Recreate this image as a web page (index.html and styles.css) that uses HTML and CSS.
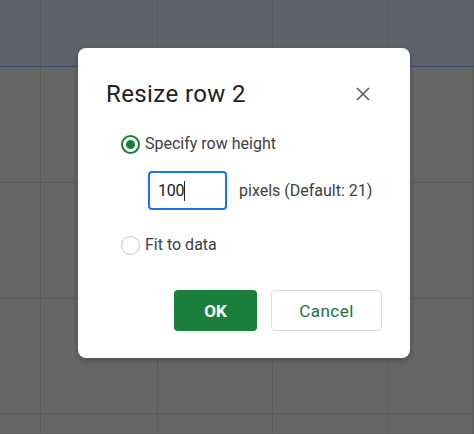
FILE: index.html
```html
<!DOCTYPE html>
<html>
<head>
<meta charset="utf-8">
<link rel="stylesheet" href="styles.css">
</head>
<body>
<div class="sheet">
  <div class="cell sel"></div><div class="cell sel"></div><div class="cell sel"></div><div class="cell sel"></div><div class="cell sel"></div>
  <div class="cell"></div><div class="cell"></div><div class="cell"></div><div class="cell"></div><div class="cell"></div>
  <div class="cell"></div><div class="cell"></div><div class="cell"></div><div class="cell"></div><div class="cell"></div>
  <div class="cell"></div><div class="cell"></div><div class="cell"></div><div class="cell"></div><div class="cell"></div>
  <div class="cell"></div><div class="cell"></div><div class="cell"></div><div class="cell"></div><div class="cell"></div>
</div>
<div class="overlay">
  <div class="dialog">
    <div class="header">
      <div class="title">Resize row 2</div>
      <div class="close">
        <svg width="14" height="14" viewBox="0 0 14 14"><path d="M1 1L13 13M13 1L1 13" stroke="#5f6368" stroke-width="1.7" fill="none"/></svg>
      </div>
    </div>
    <div class="options">
      <div class="option">
        <span class="radio checked"><span class="dot"></span></span>
        <span class="label">Specify row height</span>
      </div>
      <div class="size-row">
        <div class="field"><span class="value">100</span><span class="caret"></span></div>
        <span class="label">pixels (Default: 21)</span>
      </div>
      <div class="option fit">
        <span class="radio"></span>
        <span class="label">Fit to data</span>
      </div>
    </div>
    <div class="actions">
      <div class="btn ok">OK</div>
      <div class="btn cancel">Cancel</div>
    </div>
  </div>
</div>
</body>
</html>
```

FILE: styles.css
```css
html, body {
  margin: 0;
  padding: 0;
}
body {
  width: 474px;
  height: 434px;
  overflow: hidden;
  background: #666666;
  font-family: Roboto, "Liberation Sans", sans-serif;
  position: relative;
}
.sheet {
  display: grid;
  grid-template-columns: 41px 117px 115px 116px 1fr;
  grid-template-rows: 67px 116px 116px 115px 1fr;
  width: 474px;
  height: 434px;
}
.cell {
  box-sizing: border-box;
  border-right: 1px solid #5b5b5b;
  border-bottom: 1px solid #5b5b5b;
  background: #666666;
}
.cell.sel {
  background: #5e6269;
  border-right-color: #575b63;
  border-bottom-color: #3f4a72;
}
.overlay {
  position: absolute;
  left: 0;
  top: 0;
  right: 0;
  bottom: 0;
  padding: 48px 0 0 78px;
}
.dialog {
  box-sizing: border-box;
  width: 332px;
  height: 310px;
  background: #ffffff;
  border-radius: 8px;
  box-shadow: 0 2px 6px rgba(0,0,0,0.25);
  padding: 26px 28px 27px 28px;
  display: flex;
  flex-direction: column;
}
.header {
  display: flex;
  justify-content: space-between;
  align-items: center;
  height: 40px;
}
.title {
  font-size: 24px;
  line-height: 32px;
  color: #202124;
  letter-spacing: 0.4px;
}
.close {
  width: 40px;
  height: 40px;
  display: flex;
  align-items: center;
  justify-content: center;
  margin-right: -1px;
}
.options {
  margin-top: 18px;
  padding-left: 15px;
  display: flex;
  flex-direction: column;
}
.option {
  display: flex;
  align-items: center;
  height: 24px;
  gap: 5px;
}
.label {
  font-size: 16px;
  line-height: 24px;
  color: #3c4043;
}
.radio {
  box-sizing: border-box;
  width: 19px;
  height: 19px;
  border-radius: 50%;
  border: 1.5px solid #c6c6c6;
  display: flex;
  align-items: center;
  justify-content: center;
}
.radio.checked {
  border: 2.5px solid #188038;
}
.dot {
  width: 9px;
  height: 9px;
  border-radius: 50%;
  background: #188038;
}
.size-row {
  margin-top: 15px;
  margin-left: 27px;
  display: flex;
  align-items: center;
  gap: 12px;
}
.field {
  box-sizing: border-box;
  width: 79px;
  height: 39px;
  border: 2px solid #1a73e8;
  border-radius: 4px;
  padding-left: 8px;
  display: flex;
  align-items: center;
}
.value {
  font-size: 16px;
  color: #202124;
  letter-spacing: -0.3px;
}
.caret {
  width: 1px;
  height: 20px;
  background: #202124;
}
.fit {
  margin-top: 23px;
}
.actions {
  margin-top: auto;
  display: flex;
  justify-content: flex-end;
  gap: 14px;
}
.btn {
  box-sizing: border-box;
  height: 41px;
  border-radius: 4px;
  display: flex;
  align-items: center;
  justify-content: center;
  font-size: 17px;
}
.ok {
  width: 83px;
  background: #1a7f3d;
  color: #ffffff;
  font-weight: 700;
}
.cancel {
  width: 111px;
  border: 1px solid #dadce0;
  color: #1e7045;
  font-weight: 400;
  letter-spacing: 0.5px;
}
```
